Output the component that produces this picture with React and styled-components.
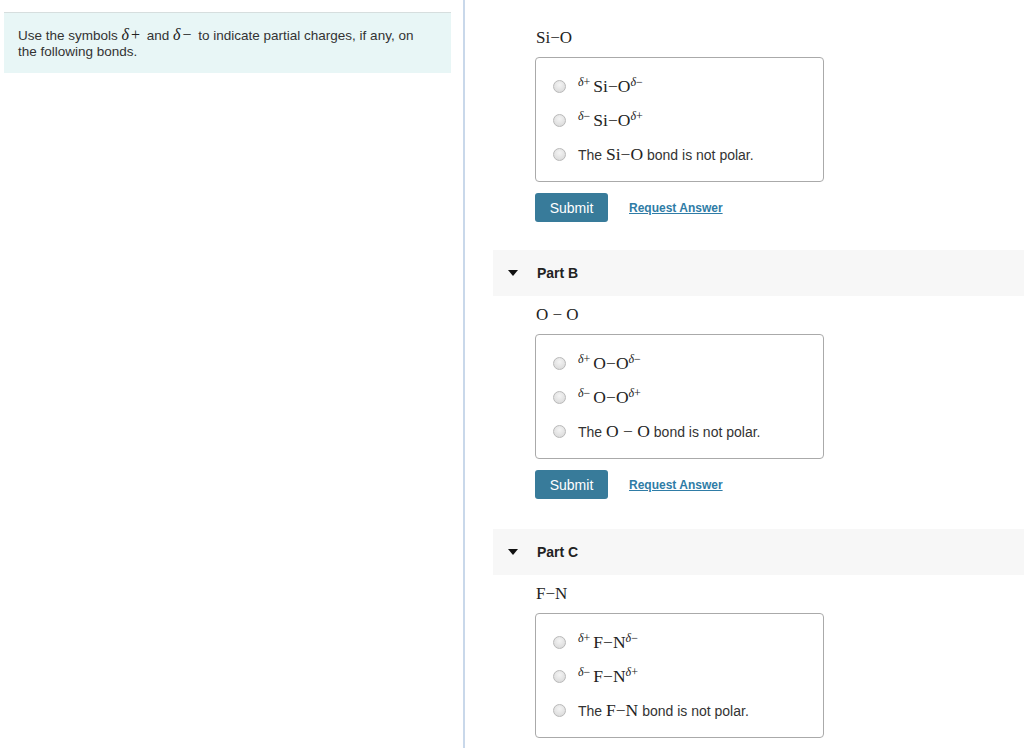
import React from "react";
import styled, { createGlobalStyle } from "styled-components";

const Global = createGlobalStyle`
  html, body { margin: 0; padding: 0; background: #fff; }
  body { font-family: "Liberation Sans", Arial, sans-serif; color: #333; }
`;

const Page = styled.div`
  display: flex;
  min-height: 748px;
`;

const LeftCol = styled.div`
  width: 463px;
  flex: none;
  padding: 12px 12px 0 4px;
  box-sizing: border-box;
`;

const Prompt = styled.div`
  background: #e8f6f6;
  border-top: 1px solid #d6dede;
  padding: 14px 30px 13px 14px;
  font-size: 13.5px;
  line-height: 16px;
  color: #333;
`;

const Divider = styled.div`
  width: 2px;
  flex: none;
  background: #c9d8ea;
`;

const RightCol = styled.div`
  flex: 1;
  padding: 0 0 0 28px;
`;

const Part = styled.section`
  display: flex;
  flex-direction: column;
`;

const PartHeader = styled.div`
  display: flex;
  align-items: center;
  height: 46px;
  background: #f7f7f7;
  padding-left: 15px;
  gap: 19px;
  font-weight: bold;
  font-size: 14px;
  color: #222;
  margin-top: 28px;
`;

const Caret = styled.span`
  width: 0;
  height: 0;
  border-left: 5px solid transparent;
  border-right: 5px solid transparent;
  border-top: 6px solid #111;
`;

const PartBody = styled.div`
  padding-left: 42px;
  display: flex;
  flex-direction: column;
  align-items: flex-start;
  padding-top: ${(p) => (p.$first ? "28px" : "9px")};
  padding-bottom: ${(p) => (p.$first ? "0" : "2px")};
`;

const Label = styled.div`
  font-family: "Liberation Serif", "Times New Roman", serif;
  font-size: 17px;
  line-height: 20px;
  color: #222;
  margin-bottom: 9px;
  padding-left: 1px;
`;

const Options = styled.div`
  width: 289px;
  box-sizing: border-box;
  border: 1px solid #aaa;
  border-radius: 4px;
  padding: 11px 0 10px 0;
`;

const Option = styled.label`
  display: flex;
  align-items: center;
  height: 34px;
  padding-left: 17px;
  gap: 12px;
  font-size: 14px;
  color: #333;
`;

const Radio = styled.span`
  width: 11px;
  height: 11px;
  border-radius: 50%;
  border: 1px solid #b9b9b9;
  background: radial-gradient(circle at 50% 35%, #f4f4f4, #d6d6d6);
  flex: none;
`;

const Math = styled.span`
  font-family: "Liberation Serif", "Times New Roman", serif;
  font-size: 17.5px;
  color: #222;
`;

const Sup = styled.sup`
  font-family: "Liberation Serif", "Times New Roman", serif;
  font-size: 12px;
  vertical-align: 6px;
  line-height: 0;
  margin-right: ${(p) => (p.$pre ? "3px" : "0")};
`;

const Delta = styled.i`
  font-style: italic;
`;

const Actions = styled.div`
  display: flex;
  align-items: center;
  gap: 21px;
  margin-top: 11px;
`;

const SubmitButton = styled.button`
  width: 73px;
  height: 29px;
  border: none;
  border-radius: 3px;
  background: #387b9a;
  color: #fff;
  font-family: "Liberation Sans", Arial, sans-serif;
  font-size: 14px;
  padding: 0;
`;

const RequestLink = styled.a`
  font-size: 12px;
  font-weight: bold;
  color: #2f7ca6;
  text-decoration: underline;
`;

const InlineDelta = styled.span`
  font-family: "Liberation Serif", "Times New Roman", serif;
  font-size: 16px;
  color: #222;
  letter-spacing: 2px;
  margin-right: 1px;
`;

function Charge({ sign, pre }) {
  return (
    <Sup $pre={pre}>
      <Delta>δ</Delta>
      {sign}
    </Sup>
  );
}

function Molecule({ a, b, left, right, sep = "−" }) {
  return (
    <Math>
      {left && <Charge sign={left} pre />}
      {a}
      {sep}
      {b}
      {right && <Charge sign={right} />}
    </Math>
  );
}

function PartBlock({ title, a, b, label, notPolar, first }) {
  return (
    <Part>
      {title && (
        <PartHeader>
          <Caret />
          {title}
        </PartHeader>
      )}
      <PartBody $first={first}>
        <Label>{label}</Label>
        <Options>
          <Option>
            <Radio />
            <Molecule a={a} b={b} left="+" right="−" />
          </Option>
          <Option>
            <Radio />
            <Molecule a={a} b={b} left="−" right="+" />
          </Option>
          <Option>
            <Radio />
            <span>
              The <Math>{notPolar}</Math> bond is not polar.
            </span>
          </Option>
        </Options>
        <Actions>
          <SubmitButton>Submit</SubmitButton>
          <RequestLink href="#">Request Answer</RequestLink>
        </Actions>
      </PartBody>
    </Part>
  );
}

export default function App() {
  return (
    <>
      <Global />
      <Page>
        <LeftCol>
          <Prompt>
            Use the symbols <InlineDelta><i>δ</i>+</InlineDelta> and{" "}
            <InlineDelta><i>δ</i>−</InlineDelta> to indicate partial charges, if any, on
            the following bonds.
          </Prompt>
        </LeftCol>
        <Divider />
        <RightCol>
          <PartBlock first a="Si" b="O" label="Si−O" notPolar="Si−O" />
          <PartBlock title="Part B" a="O" b="O" label="O − O" notPolar="O − O" />
          <PartBlock title="Part C" a="F" b="N" label="F−N" notPolar="F−N" />
        </RightCol>
      </Page>
    </>
  );
}
